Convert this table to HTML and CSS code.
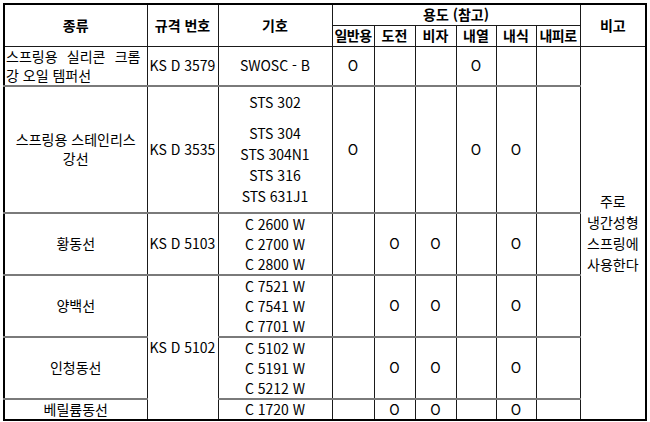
FILE: index.html
```html
<!DOCTYPE html>
<html lang="ko">
<head>
<meta charset="utf-8">
<title>스프링용 선재</title>
<link rel="stylesheet" href="styles.css">
</head>
<body>
<table class="spec">
  <colgroup>
    <col class="c-kind">
    <col class="c-std">
    <col class="c-sym">
    <col class="c-u1">
    <col class="c-u2">
    <col class="c-u3">
    <col class="c-u4">
    <col class="c-u5">
    <col class="c-u6">
    <col class="c-note">
  </colgroup>
  <thead>
    <tr class="h1">
      <th rowspan="2">종류</th>
      <th rowspan="2">규격 번호</th>
      <th rowspan="2">기호</th>
      <th colspan="6">용도 (참고)</th>
      <th rowspan="2">비고</th>
    </tr>
    <tr class="h2">
      <th class="tight">일반용</th>
      <th>도전</th>
      <th>비자</th>
      <th>내열</th>
      <th>내식</th>
      <th class="tight">내피로</th>
    </tr>
  </thead>
  <tbody>
    <tr class="r1">
      <td class="kind justify">스프링용 실리콘 크롬 강 오일 템퍼선</td>
      <td class="std">KS D 3579</td>
      <td>SWOSC - B</td>
      <td>O</td><td></td><td></td><td>O</td><td></td><td></td>
      <td rowspan="6" class="note">주로<br>냉간성형<br>스프링에<br>사용한다</td>
    </tr>
    <tr class="r2">
      <td class="kind">스프링용 스테인리스 강선</td>
      <td class="std">KS D 3535</td>
      <td class="sts"><span class="first">STS 302</span><span>STS 304</span><span>STS 304N1</span><span>STS 316</span><span>STS 631J1</span></td>
      <td>O</td><td></td><td></td><td>O</td><td>O</td><td></td>
    </tr>
    <tr class="r3">
      <td class="kind">황동선</td>
      <td class="std">KS D 5103</td>
      <td class="sym3">C 2600 W<br>C 2700 W<br>C 2800 W</td>
      <td></td><td>O</td><td>O</td><td></td><td>O</td><td></td>
    </tr>
    <tr class="r4">
      <td class="kind">양백선</td>
      <td class="std" rowspan="3">KS D 5102</td>
      <td class="sym3">C 7521 W<br>C 7541 W<br>C 7701 W</td>
      <td></td><td>O</td><td>O</td><td></td><td>O</td><td></td>
    </tr>
    <tr class="r5">
      <td class="kind">인청동선</td>
      <td class="sym3">C 5102 W<br>C 5191 W<br>C 5212 W</td>
      <td></td><td>O</td><td>O</td><td></td><td>O</td><td></td>
    </tr>
    <tr class="r6">
      <td class="kind">베릴륨동선</td>
      <td>C 1720 W</td>
      <td></td><td>O</td><td>O</td><td></td><td>O</td><td></td>
    </tr>
  </tbody>
</table>
</body>
</html>
```
FILE: styles.css
```css
html, body {
  margin: 0;
  padding: 0;
  background: #ffffff;
}

body {
  padding: 3px 0 0 3px;
  font-family: "Noto Sans CJK KR", "Noto Sans", sans-serif;
  font-size: 14px;
  line-height: 19px;
  color: #000000;
}

.spec {
  border-collapse: collapse;
  table-layout: fixed;
  width: 643px;
  border: 2px solid #000000;
}

.c-kind { width: 143px; }
.c-std { width: 71px; }
.c-sym { width: 114px; }
.c-u1 { width: 42px; }
.c-u2 { width: 41px; }
.c-u3 { width: 41px; }
.c-u4 { width: 40px; }
.c-u5 { width: 40px; }
.c-u6 { width: 44px; }
.c-note { width: 66px; }

.spec th,
.spec td {
  border: 1px solid #1a1a1a;
  padding: 0 1px;
  text-align: center;
  vertical-align: middle;
  word-break: keep-all;
  overflow: hidden;
}

.spec th {
  font-weight: bold;
}

.spec tbody tr + tr td {
  border-top: 2px solid #7a7a7a;
}

.spec .tight {
  padding: 0;
  letter-spacing: -0.5px;
  white-space: nowrap;
}

.h1 { height: 21px; }
.h2 { height: 21px; }
.r1 { height: 38px; }
.r2 { height: 127px; }
.r3 { height: 61px; }
.r4 { height: 62px; }
.r5 { height: 62px; }
.r6 { height: 21px; }

.spec .justify {
  text-align: justify;
  text-align-last: left;
  padding-right: 6px;
  line-height: 19px;
}

.std {
  white-space: nowrap;
}

.sts span {
  display: block;
  line-height: 21px;
}

.sts .first {
  margin-bottom: 10px;
}

.sym3 {
  line-height: 20px;
}

.note {
  line-height: 21px;
}
```
